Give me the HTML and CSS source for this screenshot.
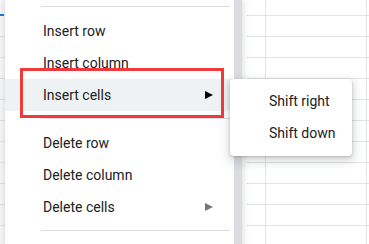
FILE: index.html
```html
<!DOCTYPE html>
<html lang="en">
<head>
    <meta charset="UTF-8">
    <title>Insert cells menu</title>
    <link rel="stylesheet" href="styles.css">
</head>
<body>
    <div class="sheet">
        <div class="edge">
            <div class="edge-select"></div>
        </div>

        <div class="menu">
            <div class="menu-list">
                <div class="sep sep-top"></div>
                <div class="item">Insert row</div>
                <div class="item">Insert column</div>
                <div class="item hover">Insert cells <span class="arrow"></span></div>
                <div class="sep"></div>
                <div class="item">Delete row</div>
                <div class="item">Delete column</div>
                <div class="item">Delete cells <span class="arrow dim"></span></div>
                <div class="sep"></div>
            </div>
            <div class="scroll">
                <div class="thumb"></div>
            </div>
        </div>

        <div class="grid">
            <div class="col col-shade"></div>
            <div class="col col-a lined"></div>
            <div class="col col-b lined"></div>
            <div class="col col-c lined"></div>
        </div>
    </div>

    <div class="submenu">
        <div class="item sub">Shift right</div>
        <div class="item sub">Shift down</div>
    </div>

    <div class="mark"></div>
</body>
</html>
```

FILE: styles.css
```css
body {
    margin: 0;
    width: 369px;
    height: 244px;
    overflow: hidden;
    position: relative;
    background: #fff;
    font-family: Roboto, "Noto Sans", Arial, sans-serif;
    font-size: 14px;
    color: #202124;
}
.sheet {
    display: flex;
    height: 244px;
}
.edge {
    width: 5px;
    flex: none;
    background:
        repeating-linear-gradient(to bottom, transparent 0 20px, #e2e3e3 20px 21px) 0 -5px,
        #f8f9fa;
    position: relative;
}
.edge-select {
    position: absolute;
    top: 14px;
    left: 0;
    width: 4px;
    height: 2px;
    background: #1a73e8;
}
.menu {
    display: flex;
    flex: none;
    width: 237px;
    background: #fff;
    box-shadow: 0 2px 6px 2px rgba(60, 64, 67, 0.15);
    position: relative;
    z-index: 1;
}
.menu-list {
    width: 225px;
}
.sep {
    height: 1px;
    background: #dadce0;
    margin: 7px 0 8px 36px;
}
.sep-top {
    margin-top: 6px;
}
.item {
    height: 32px;
    display: flex;
    align-items: center;
    justify-content: space-between;
    padding: 0 17px 0 38px;
    white-space: nowrap;
}
.item.hover {
    background: #eff2f2;
}
.arrow {
    width: 0;
    height: 0;
    border-top: 4px solid transparent;
    border-bottom: 4px solid transparent;
    border-left: 8px solid #000;
}
.arrow.dim {
    border-left-color: #757575;
}
.scroll {
    flex: 1;
    padding-left: 4px;
    padding-right: 0;
}
.thumb {
    width: 8px;
    height: 100%;
    background: #dadce0;
}
.grid {
    flex: 1;
    display: flex;
}
.col {
    height: 100%;
}
.lined {
    background: repeating-linear-gradient(to bottom, transparent 0 20px, #e2e3e3 20px 21px) 0 -5px;
}
.col-shade {
    width: 5px;
}
.col-a {
    width: 18px;
    border-right: 1px solid #e2e3e3;
}
.col-b {
    width: 100px;
    border-right: 1px solid #e2e3e3;
}
.col-c {
    flex: 1;
}
.submenu {
    position: absolute;
    left: 230px;
    top: 79px;
    width: 122px;
    padding: 6px 0 7px;
    background: #fff;
    border-radius: 4px;
    box-shadow: 0 1px 3px rgba(60, 64, 67, 0.3), 0 4px 8px 3px rgba(60, 64, 67, 0.15);
    z-index: 2;
}
.item.sub {
    padding-left: 39px;
}
.mark {
    position: absolute;
    left: 20px;
    top: 68px;
    width: 198px;
    height: 44px;
    border: 3px solid #f0393b;
    z-index: 3;
}
```
